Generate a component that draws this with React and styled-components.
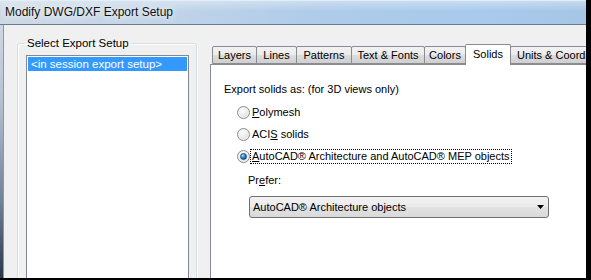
import React from "react";
import styled, { createGlobalStyle } from "styled-components";

const Global = createGlobalStyle`
  html, body { margin: 0; padding: 0; background: #fff; }
  * { box-sizing: border-box; }
`;

const Screen = styled.div`
  width: 591px;
  height: 280px;
  background: #000;
  padding: 0 5px 2px 0;
  overflow: hidden;
`;

const Window = styled.div`
  height: 100%;
  display: flex;
  flex-direction: column;
  background: #f0f0f0;
  overflow: hidden;
`;

const TitleBar = styled.div`
  flex: none;
  height: 25px;
  display: flex;
  align-items: center;
  padding: 0 0 1px 5px;
  border-top: 1px solid #e4eef8;
  border-bottom: 1px solid #6d7c8c;
  background:
    linear-gradient(180deg, rgba(255,255,255,0.35) 0%, rgba(255,255,255,0) 45%),
    linear-gradient(90deg, #cdd9e5 0%, #c3d5e8 25%, #aecbea 55%, #a9caeb 80%, #a6c6e6 100%);
  font-family: "Liberation Sans", Arial, sans-serif;
  font-size: 12px;
  color: #111;
`;

const TitleText = styled.span`
  text-shadow: 0 0 6px rgba(255, 255, 255, 0.95), 0 0 10px rgba(255, 255, 255, 0.8);
`;

const Body = styled.div`
  flex: 1;
  min-height: 0;
  display: flex;
  overflow: hidden;
`;

const FrameEdge = styled.div`
  flex: none;
  width: 4px;
  background: linear-gradient(180deg, #cdd8e3 0%, #b4c2d0 30%, #6f8195 70%, #2a3848 100%);
  border-right: 1px solid #8a98a8;
`;

const Content = styled.div`
  flex: 1;
  min-width: 0;
  display: flex;
  align-items: flex-start;
  gap: 13px;
  padding: 11px 0 0 13px;
  overflow: hidden;
  font-family: "Liberation Sans", Arial, sans-serif;
  font-size: 11px;
  color: #000;
`;

const GroupBox = styled.fieldset`
  flex: none;
  width: 180px;
  height: 280px;
  margin: 0;
  padding: 0 7px 0 8px;
  min-width: 0;
  border: 1px solid #d5dfe5;
  border-radius: 3px;
  box-shadow: inset 1px 1px 0 #fff, 1px 1px 0 #fff;
`;

const Legend = styled.legend`
  margin-left: -1px;
  padding: 0 2px;
  font-size: 11.5px;
  line-height: 14px;
  color: #000;
`;

const ListBox = styled.div`
  margin-top: 5px;
  height: 300px;
  border: 1px solid #828790;
  background: #fff;
  padding: 1px;
`;

const ListItem = styled.div`
  height: 14px;
  line-height: 14px;
  padding-left: 3px;
  font-size: 11.5px;
  background: ${(p) => (p.selected ? "#3399ff" : "transparent")};
  color: ${(p) => (p.selected ? "#fff" : "#000")};
  white-space: nowrap;
`;

const TabControl = styled.div`
  flex: none;
  width: 420px;
  margin-top: 8px;
  display: flex;
  flex-direction: column;
`;

const TabStrip = styled.div`
  display: flex;
  align-items: flex-end;
  height: 20px;
  padding-left: 2px;
`;

const Tab = styled.div`
  position: relative;
  flex: none;
  width: ${(p) => p.w}px;
  height: ${(p) => (p.active ? 21 : 18)}px;
  margin-right: -1px;
  margin-bottom: ${(p) => (p.active ? -1 : 0)}px;
  z-index: ${(p) => (p.active ? 2 : 1)};
  border: 1px solid #898c95;
  border-bottom: ${(p) => (p.active ? "none" : "1px solid #898c95")};
  border-radius: 2px 2px 0 0;
  background: ${(p) =>
    p.active ? "#fff" : "linear-gradient(180deg, #f2f2f2 0%, #ebebeb 50%, #dddddd 51%, #cfcfcf 100%)"};
  padding-top: ${(p) => (p.active ? 2 : 1)}px;
  line-height: 14px;
  text-align: center;
  white-space: nowrap;
  overflow: hidden;
  ${(p) => (p.last ? "text-align: left; padding-left: 6px;" : "")}
`;

const Panel = styled.div`
  height: 300px;
  border: 1px solid #898c95;
  background: #fff;
  padding: 18px 0 0 13px;
`;

const Heading = styled.div`
  line-height: 13px;
`;

const RadioList = styled.div`
  margin-top: 5px;
  padding-left: 13px;
  display: flex;
  flex-direction: column;
`;

const RadioRow = styled.div`
  height: 22px;
  display: flex;
  align-items: center;
`;

const RadioCircle = styled.span`
  flex: none;
  width: 13px;
  height: 13px;
  border-radius: 50%;
  border: 1px solid #8a8a8a;
  background: radial-gradient(circle at 40% 35%, #ffffff 0%, #ececec 45%, #cfcfcf 100%);
  display: flex;
  align-items: center;
  justify-content: center;
  box-shadow: inset 0 0 0 1px #f4f4f4;
`;

const RadioDot = styled.span`
  width: 7px;
  height: 7px;
  border-radius: 50%;
  background: radial-gradient(circle at 35% 30%, #b8e6ff 0%, #3c9ae0 35%, #0b4f8f 75%, #0a3766 100%);
  border: 1px solid #1c4f7c;
`;

const RadioLabel = styled.span`
  padding: 0 1px;
  line-height: 13px;
  border: 1px dotted ${(p) => (p.focused ? "#000" : "transparent")};
  white-space: nowrap;
`;

const PreferLabel = styled.div`
  margin: 7px 0 0 24px;
  line-height: 13px;
`;

const Combo = styled.div`
  margin: 9px 0 0 25px;
  width: 300px;
  height: 22px;
  border: 1px solid #707070;
  border-radius: 3px;
  background: linear-gradient(180deg, #f2f2f2 0%, #ebebeb 50%, #e2e2e2 51%, #dadada 100%);
  display: flex;
  align-items: center;
  justify-content: space-between;
  padding: 0 4px 0 3px;
  white-space: nowrap;
`;

const Arrow = () => (
  <svg width="7" height="4" viewBox="0 0 7 4">
    <path d="M0 0 H7 L3.5 4 Z" fill="#000" />
  </svg>
);

const Radio = ({ checked, focused, children }) => (
  <RadioRow>
    <RadioCircle>{checked && <RadioDot />}</RadioCircle>
    <RadioLabel focused={focused}>{children}</RadioLabel>
  </RadioRow>
);

const tabs = [
  { label: "Layers", w: 45 },
  { label: "Lines", w: 41 },
  { label: "Patterns", w: 56 },
  { label: "Text & Fonts", w: 74 },
  { label: "Colors", w: 42 },
  { label: "Solids", w: 46, active: true },
  { label: "Units & Coordinates", w: 110, last: true },
];

export default function App() {
  return (
    <>
      <Global />
      <Screen>
        <Window>
          <TitleBar>
            <TitleText>Modify DWG/DXF Export Setup</TitleText>
          </TitleBar>
          <Body>
            <FrameEdge />
            <Content>
              <GroupBox>
                <Legend>Select Export Setup</Legend>
                <ListBox>
                  <ListItem selected>&lt;in session export setup&gt;</ListItem>
                </ListBox>
              </GroupBox>
              <TabControl>
                <TabStrip>
                  {tabs.map((t) => (
                    <Tab key={t.label} w={t.w} active={t.active} last={t.last}>
                      {t.label}
                    </Tab>
                  ))}
                </TabStrip>
                <Panel>
                  <Heading>Export solids as: (for 3D views only)</Heading>
                  <RadioList>
                    <Radio>
                      <u>P</u>olymesh
                    </Radio>
                    <Radio>
                      ACI<u>S</u> solids
                    </Radio>
                    <Radio checked focused>
                      <u>A</u>utoCAD® Architecture and AutoCAD® MEP objects
                    </Radio>
                  </RadioList>
                  <PreferLabel>
                    Pr<u>e</u>fer:
                  </PreferLabel>
                  <Combo>
                    <span>AutoCAD® Architecture objects</span>
                    <Arrow />
                  </Combo>
                </Panel>
              </TabControl>
            </Content>
          </Body>
        </Window>
      </Screen>
    </>
  );
}
